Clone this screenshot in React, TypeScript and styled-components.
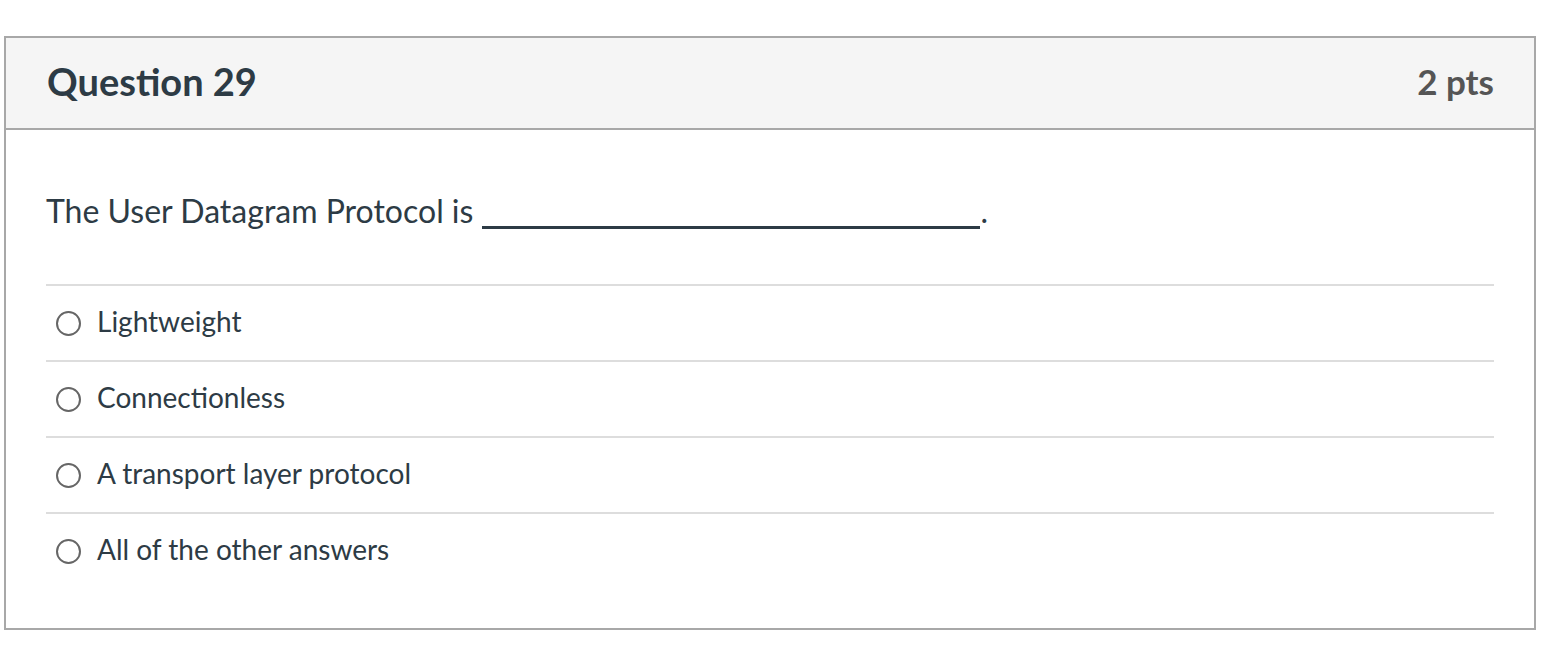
import React from "react";
import styled, { createGlobalStyle } from "styled-components";

const GlobalStyle = createGlobalStyle`
  html, body { margin: 0; padding: 0; background: #ffffff; }
  body { font-family: Lato, "Noto Sans", sans-serif; color: #2d3b45; }
`;

const Page = styled.div`
  padding: 36px 11px 0 4px;
`;

const Card = styled.section`
  border: 2px solid #a8a8a8;
  background: #fff;
  width: 1532px;
  box-sizing: border-box;
`;

const Header = styled.header`
  display: flex;
  align-items: center;
  justify-content: space-between;
  box-sizing: border-box;
  height: 92px;
  padding: 0 40px 4px 41px;
  background: #f5f5f5;
  border-bottom: 2px solid #a8a8a8;
`;

const Title = styled.h2`
  margin: 0;
  font-family: Lato, sans-serif;
  font-weight: 700;
  font-size: 38px;
  color: #2d3b45;
`;

const Points = styled.span`
  font-family: Lato, sans-serif;
  font-weight: 700;
  font-size: 35px;
  color: #555555;
`;

const Body = styled.div`
  padding: 61px 40px 40px 40px;
`;

const Prompt = styled.p`
  margin: 0 0 53px 0;
  font-size: 32px;
  line-height: 40px;
  color: #2d3b45;
`;

const Blank = styled.span`
  display: inline-block;
  width: 498px;
  height: 3px;
  background: #2d3b45;
  margin-left: 9px;
  vertical-align: -6px;
`;

const Answers = styled.ul`
  list-style: none;
  margin: 0;
  padding: 0;
`;

const Answer = styled.li`
  display: flex;
  align-items: center;
  height: 74px;
  box-sizing: content-box;
  border-top: 2px solid #dddddd;
  padding-left: 10px;
  font-size: 28px;
  color: #2d3b45;
`;

const AnswerText = styled.span`
  margin-bottom: 5px;
`;

const Radio = styled.span`
  width: 21px;
  height: 21px;
  border: 2px solid #666666;
  border-radius: 50%;
  margin-right: 16px;
  flex: none;
  margin-top: 1px;
`;

const answers = [
  "Lightweight",
  "Connectionless",
  "A transport layer protocol",
  "All of the other answers",
];

export default function App() {
  return (
    <>
      <GlobalStyle />
      <Page>
        <Card>
          <Header>
            <Title>Question 29</Title>
            <Points>2 pts</Points>
          </Header>
          <Body>
            <Prompt>
              The User Datagram Protocol is<Blank />.
            </Prompt>
            <Answers>
              {answers.map((a) => (
                <Answer key={a}>
                  <Radio />
                  <AnswerText>{a}</AnswerText>
                </Answer>
              ))}
            </Answers>
          </Body>
        </Card>
      </Page>
    </>
  );
}
